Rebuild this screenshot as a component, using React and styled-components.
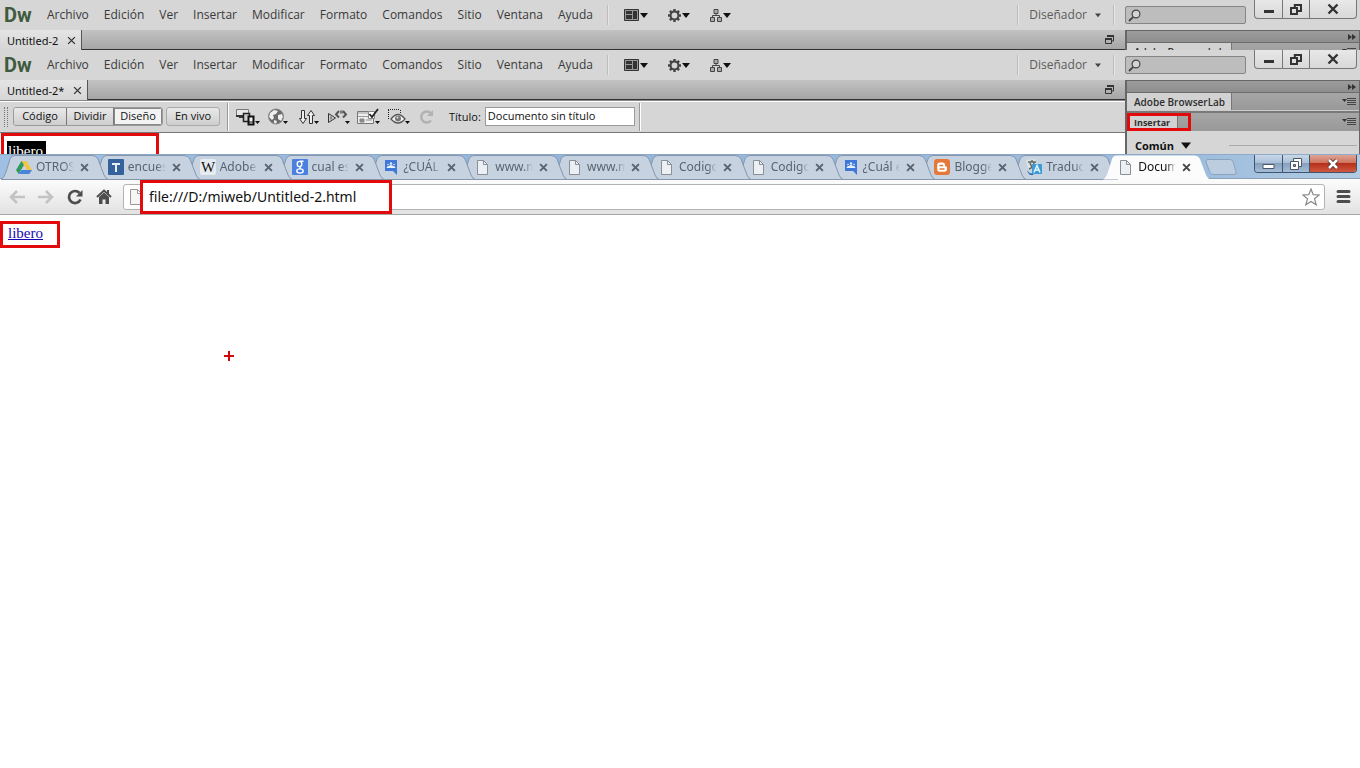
import styled, { createGlobalStyle, css } from "styled-components";

const GlobalStyle = createGlobalStyle`
  *, *::before, *::after { box-sizing: border-box; }
  body {
    margin: 0;
    background: #fff;
    font-family: "Open Sans", "Noto Sans", sans-serif;
    font-size: 12px;
  }
  button, input {
    font: inherit;
    color: inherit;
    margin: 0;
    padding: 0;
    border: 0;
    background: none;
    border-radius: 0;
  }
  svg { display: block; flex: none; }
`;

const Screen = styled.div`
  min-height: 100vh;
  display: flex;
  flex-direction: column;
  overflow: hidden;
`;

/* ---------- Dreamweaver ---------- */

const DwWindow = styled.section`
  height: ${({ $height }) => $height}px;
  overflow: hidden;
  background: #d6d6d6;
  flex: none;
`;

const MenuBar = styled.header`
  height: 30px;
  display: flex;
  align-items: center;
  color: #3a3a3a;
`;

const DwLogo = styled.span`
  width: 47px;
  padding-left: 4px;
  font-family: Roboto, sans-serif;
  font-weight: 700;
  font-size: 20px;
  line-height: 28px;
  color: #3f5a3f;
`;

const Menu = styled.nav`
  display: flex;
  gap: 15px;
  margin-right: 14px;
  button { line-height: 28px; }
`;

const Separator = styled.span`
  width: 2px;
  height: 20px;
  background: #bcbcbc;
  border-right: 1px solid #e6e6e6;
`;

const IconMenus = styled.div`
  display: flex;
  gap: 20px;
  margin-left: 15px;
  button {
    display: flex;
    align-items: center;
    gap: 1px;
  }
`;

const Workspace = styled.button`
  display: flex;
  align-items: center;
  gap: 8px;
  padding: 0 12px 0 10px;
  line-height: 28px;
  color: #5c5c5c;
`;

const Spacer = styled.span`
  flex: 1;
`;

const SearchBox = styled.label`
  width: 121px;
  height: 18px;
  margin: 0 8px 0 10px;
  padding-left: 2px;
  display: flex;
  align-items: center;
  border: 1px solid #858585;
  border-radius: 2px;
  background: #bdbdbd;
  input {
    flex: 1;
    min-width: 0;
    outline: none;
  }
`;

const Caption = styled.div`
  align-self: flex-start;
  display: grid;
  grid-template-columns: 27px 27px 47px;
  height: 19px;
  margin-right: 3px;
  border: 1px solid #777;
  border-top: 0;
  border-radius: 0 0 4px 4px;
  background: linear-gradient(#e8e8e8, #d8d8d8);
  button {
    display: flex;
    align-items: center;
    justify-content: center;
  }
  button + button { border-left: 1px solid #777; }
`;

const DwBody = styled.div`
  display: flex;
  align-items: stretch;
`;

const DocColumn = styled.div`
  flex: 1;
  min-width: 0;
`;

const DocBar = styled.div`
  height: 20px;
  display: flex;
  align-items: stretch;
  background: linear-gradient(#c2c2c2, #a6a6a6);
  border-bottom: 1px solid #333;
`;

const DocTab = styled.div`
  display: flex;
  align-items: center;
  gap: 9px;
  height: 20px;
  padding: 0 5px 0 7px;
  border-right: 1px solid #555;
  background: linear-gradient(#e4e4e4, #d6d6d6);
  font-family: "Noto Sans", sans-serif;
  font-size: 11px;
  color: #111;
`;

const PlainButton = styled.button`
  display: flex;
  align-items: center;
  justify-content: center;
`;

const RestoreButton = styled(PlainButton)`
  margin: 0 11px 0 auto;
`;

const DocToolbar = styled.div`
  height: 33px;
  display: flex;
  align-items: center;
  padding-left: 4px;
  border-top: 1px solid #888;
  border-bottom: 1px solid #777;
  background: #d6d6d6;
  box-shadow: inset 0 1px #fff;
  font-size: 11px;
  color: #111;
`;

const Grip = styled.span`
  width: 4px;
  height: 20px;
  margin-right: 5px;
  border: 1px dotted #777;
  border-width: 0 1px;
`;

const Segments = styled.div`
  display: flex;
  border: 1px solid #9a9a9a;
  border-radius: 3px;
  height: 19px;
  overflow: hidden;
`;

const Segment = styled.button`
  width: ${({ $width }) => $width}px;
  padding-bottom: 2px;
  line-height: 15px;
  background: linear-gradient(#e9e9e9, #cecece);
  ${({ $active }) =>
    $active &&
    css`
      background: #f3f3f3;
      box-shadow: inset 0 0 0 1px #888;
    `}
  & + & { border-left: 1px solid #777; }
`;

const LiveButton = styled.button`
  width: 54px;
  height: 19px;
  padding-bottom: 2px;
  line-height: 15px;
  margin: 0 7px 0 3px;
  border: 1px solid #aaa;
  border-radius: 3px;
  background: linear-gradient(#e9e9e9, #cecece);
`;

const ToolSeparator = styled.span`
  width: 2px;
  height: 28px;
  border-left: 1px solid #999;
  background: #fff;
`;

const ToolIcons = styled.div`
  display: flex;
  align-items: center;
  gap: 6px;
  margin: 0 9px 0 7px;
  button { width: 24px; }
`;

const TitleField = styled.label`
  display: flex;
  align-items: center;
  gap: 4px;
  margin-right: 4px;
  input {
    width: 150px;
    height: 19px;
    padding: 0 2px 3px;
    border: 1px solid #9a9a9a;
    background: #fff;
  }
`;

const DesignView = styled.div`
  height: 22px;
  background: #fff;
  padding-left: 1px;
  overflow: hidden;
`;

const Selection = styled.span`
  display: inline-block;
  margin: 5px 0 0 3px;
  padding: 0 3px 0 1px;
  background: #000;
  color: #fff;
  font: 15px/21px "Liberation Serif", serif;
`;

const Marker = styled.div`
  border: 3px solid #e20a0a;
`;

const SelectionMarker = styled(Marker)`
  width: 158px;
  height: 40px;
`;

const Panels = styled.aside`
  width: 235px;
  flex: none;
  border: 1px solid #666;
  border-width: 1px 1px 0 2px;
  color: #2e2e2e;
`;

const PanelTop = styled.div`
  height: 12px;
  display: flex;
  align-items: center;
  justify-content: flex-end;
  padding-right: 3px;
  background: linear-gradient(#9c9c9c, #8e8e8e);
  border-bottom: 1px solid #6c6c6c;
`;

const PanelRow = styled.div`
  height: ${({ $small }) => ($small ? 18 : 17)}px;
  display: flex;
  align-items: stretch;
  justify-content: space-between;
  padding-right: 3px;
  background: linear-gradient(#a6a6a6, #999);
  font-size: ${({ $small }) => ($small ? 9 : 10)}px;
  font-weight: ${({ $small }) => ($small ? 700 : 600)};
`;

const PanelTab = styled.div`
  display: flex;
  align-items: center;
  padding: 0 6px 0 7px;
  background: #d2d2d2;
  border-right: 1px solid #777;
`;

const InsertMarker = styled(Marker)`
  width: 64px;
  display: flex;
  ${PanelTab} { padding: 0 7px 0 4px; }
`;

const PanelGap = styled.div`
  height: 3px;
  background: #7a7a7a;
  border-top: 1px solid #ccc;
`;

const Category = styled.div`
  display: flex;
  align-items: center;
  height: 28px;
  padding: 0 2px 0 8px;
  background: #d6d6d6;
  button {
    display: flex;
    align-items: center;
    gap: 7px;
    width: 94px;
    font-size: 11px;
    font-weight: 700;
    color: #111;
  }
  hr {
    flex: 1;
    border: 0;
    border-top: 1px solid #aaa;
  }
`;

/* ---------- Browser ---------- */

const Browser = styled.main`
  flex: 1;
  display: flex;
  flex-direction: column;
`;

const TabStrip = styled.div`
  height: 25px;
  display: flex;
  align-items: stretch;
  background: linear-gradient(90deg, #9fc0e3, #94b4da 40%, #9dbddd 88%, #b2cbe2);
  border-top: 1px solid #8fa9c8;
  border-bottom: 1px solid #8d9fb5;
`;

const Tabs = styled.div`
  flex: 1;
  display: flex;
  min-width: 0;
  margin-bottom: -1px;
`;

const TabItem = styled.div`
  flex: 1 1 0;
  min-width: 0;
  position: relative;
  z-index: ${({ $order }) => $order};
  display: flex;
  align-items: center;
  padding: 0 3px 0 16px;
  font-family: "Noto Sans", sans-serif;
  color: ${({ $active }) => ($active ? "#111" : "#5a6470")};
  > * { position: relative; }
`;

const TabShape = styled.svg`
  && {
    position: absolute;
    left: 0;
    top: 0;
  }
`;

const TabTitle = styled.span`
  flex: 1;
  margin: 0 6px 0 4px;
  overflow: hidden;
  white-space: nowrap;
  line-height: 24px;
  mask-image: linear-gradient(90deg, #000 75%, transparent);
`;

const NewTab = styled(PlainButton)`
  align-self: center;
  margin: 0 17px 0 11px;
`;

const BrowserCaption = styled.div`
  display: grid;
  grid-template-columns: 27px 27px 47px;
  height: 18px;
  margin-right: 3px;
  border: 1px solid #40546e;
  border-top: 0;
  border-radius: 0 0 4px 4px;
  overflow: hidden;
`;

const BrowserCaptionButton = styled(PlainButton)`
  background: ${({ $close }) =>
    $close
      ? "linear-gradient(#dfa394, #cf7560 45%, #b5301c 50%, #d0583f)"
      : "linear-gradient(#c9d8e8, #aabfd8 45%, #86a0bf 50%, #a4bcd6)"};
  & + & { border-left: 1px solid #40546e; }
`;

const NavBar = styled.div`
  height: 36px;
  display: flex;
  align-items: center;
  padding: 0 9px 0 9px;
  border-bottom: 1px solid #a6a6a6;
  background: linear-gradient(#fcfcfc, #e2e2e2);
`;

const NavButtons = styled.div`
  display: flex;
  gap: 13px;
  margin-right: 11px;
`;

const Omnibox = styled.div`
  flex: 1;
  height: 26px;
  display: flex;
  align-items: center;
  justify-content: space-between;
  padding: 0 4px 0 6px;
  border: 1px solid #b3b3b3;
  border-radius: 3px;
  background: #fff;
`;

const Address = styled.div`
  display: flex;
  align-items: center;
  input {
    width: 252px;
    height: 34px;
    padding: 0 6px 1px;
    margin-left: -1px;
    border: 3px solid #e20a0a;
    background: #fff;
    font-family: "Noto Sans", sans-serif;
    font-size: 14px;
    color: #111;
    outline: none;
    z-index: 1;
  }
`;

const BrowserMenu = styled(PlainButton)`
  margin-left: 11px;
`;

const WebPage = styled.article`
  position: relative;
  flex: 1;
  padding-top: 6px;
  background: #fff;
`;

const LinkMarker = styled(Marker)`
  width: 60px;
  height: 27px;
  padding-left: 5px;
  font: 15px/18px "Liberation Serif", serif;
  a { color: #1608b4; }
`;

const CrossPointer = styled.svg`
  position: absolute;
  left: 224px;
  top: 136px;
`;

/* ---------- Icons ---------- */

const Arrow = ({ size = 7, color = "#111" }) => (
  <svg width={size} height={size} viewBox="0 0 8 8" aria-hidden="true">
    <path d="M0 2h8L4 7z" fill={color} />
  </svg>
);

const Cross = ({ color = "#555", size = 8, weight = 2 }) => (
  <svg width={size} height={size} viewBox="0 0 8 8" aria-hidden="true">
    <path d="M1 1l6 6M7 1L1 7" stroke={color} strokeWidth={weight} />
  </svg>
);

const LayoutIcon = () => (
  <svg width="15" height="12" viewBox="0 0 15 12">
    <path d="M.5.5h14v11H.5z" fill="#999" stroke="#333" />
    <path d="M2 2h6v3H2zM2 6h6v4H2zM9 2h4v8H9z" fill="#333" />
  </svg>
);

const GearIcon = () => (
  <svg width="13" height="13" viewBox="0 0 13 13">
    <path
      d="M6.500 0v13M0 6.500h13M1.900 1.900l9.200 9.200M11.100 1.900l-9.200 9.200"
      stroke="#444"
      strokeWidth="2.400"
    />
    <circle cx="6.500" cy="6.500" r="3.900" fill="#d6d6d6" stroke="#444" strokeWidth="2" />
  </svg>
);

const SiteIcon = () => (
  <svg width="12" height="13" viewBox="0 0 12 13">
    <path d="M4 .5h4v4H4zM.5 8.500h4v4h-4zM7.500 8.500h4v4h-4z" fill="#aaa" stroke="#444" />
    <path d="M6 5v2M2.500 8V6.500h7V8" fill="none" stroke="#444" />
  </svg>
);

const LensIcon = () => (
  <svg width="13" height="13" viewBox="0 0 13 13">
    <circle cx="8" cy="5" r="3.900" fill="#d4d4d4" stroke="#444" strokeWidth="1.200" />
    <path d="M5.300 7.800L1 12" stroke="#444" strokeWidth="1.800" />
  </svg>
);

const CascadeIcon = () => (
  <svg width="9" height="9" viewBox="0 0 9 9">
    <path d="M2 .5h7M2 1.500h7M0 4.500h7" stroke="#333" />
    <path d="M8.500 1v5H7M.5 4v4.500h6V4M0 3.500h7" fill="none" stroke="#333" />
  </svg>
);

const MinIcon = () => (
  <svg width="10" height="10" viewBox="0 0 10 10">
    <path d="M0 6h10v3H0z" fill="#333" />
  </svg>
);

const RestoreIcon = () => (
  <svg width="12" height="11" viewBox="0 0 12 11">
    <path d="M4.800 3V1h6.200v6H8" fill="none" stroke="#333" strokeWidth="2" />
    <path d="M1 4h6v6H1z" fill="none" stroke="#333" strokeWidth="2" />
  </svg>
);

const PanelMenuIcon = () => (
  <svg width="15" height="17" viewBox="0 0 15 17">
    <path d="M1 6h5L3.500 9z" fill="#333" />
    <path d="M6 5.500h9M6 7.500h9M6 9.500h9M6 11.500h9" stroke="#444" />
  </svg>
);

const ExpandIcon = () => (
  <svg width="8" height="6" viewBox="0 0 8 6">
    <path d="M0 0l4 3-4 3zM4 0l4 3-4 3z" fill="#333" />
  </svg>
);

const toolDrawings = {
  Multipantalla: (
    <>
      <path d="M.5 1.500h12v6H.5z" fill="#e8e8e8" stroke="#777" />
      <path d="M0 7h8v2H0zM3 9h4v1H3z" fill="#333" />
      <path d="M7.500 5.500h6v8h-6z" fill="#ccc" stroke="#222" strokeWidth="1.500" />
      <path d="M12.500 8.500h5v8h-5z" fill="#f3f3f3" stroke="#111" strokeWidth="2" />
      <path d="M13 14h4" stroke="#111" />
    </>
  ),
  Vista: (
    <>
      <circle cx="10" cy="8.500" r="7.500" fill="#6a6a6a" />
      <path d="M4 5l4-3 4 1-2 3-3 1 1 3-2 2-3-3zM12 7l4-1 1 3-2 4-3-2zM8 12l3 1-1 3-2-1z" fill="#eee" />
      <circle cx="10" cy="8.500" r="7.500" fill="none" stroke="#888" />
    </>
  ),
  Archivos: (
    <g fill="#eee" stroke="#333">
      <path d="M5.500 2.500h3v8h2l-3.500 5-3.500-5h2z" />
      <path d="M13.500 15.500h3v-8h2L15 2.500l-3.500 5h2z" />
    </g>
  ),
  Validar: (
    <>
      <path d="M2.500 5.500l7 4.500-7 4.500z" fill="#ccc" stroke="#333" />
      <path d="M5 8.500v3" stroke="#444" />
      <path d="M13 3l-3 3.500 3 3M17 3l3 3.500-3 3" fill="none" stroke="#555" strokeWidth="2" />
      <path d="M14 2.500h3v3h-3z" fill="#777" />
    </>
  ),
  Comprobar: (
    <>
      <path d="M1.500 3.500h16v12h-16z" fill="#eee" stroke="#777" />
      <path d="M2 5h15M2 8.500h15" stroke="#999" />
      <path d="M4 11h4v3H4zM10 12h6" fill="#888" stroke="#888" />
      <path d="M12.500 3.500h6v7h-6z" fill="#fff" stroke="#888" />
      <path d="M13.500 6l2.500 3 6-8" fill="none" stroke="#222" strokeWidth="1.800" />
    </>
  ),
  Ayudas: (
    <>
      <path d="M2 1.500h12M2.500 2v10M14.500 2v3" stroke="#222" strokeDasharray="1 1" />
      <path d="M5 11q7-9 14 0-7 8-14 0z" fill="#f3f3f3" stroke="#555" strokeWidth="1.300" />
      <circle cx="12" cy="10.500" r="3" fill="#777" />
      <circle cx="11.500" cy="9.500" r="1" fill="#ddd" />
    </>
  ),
  Actualizar: (
    <>
      <path d="M15 12.500A5.500 5.500 0 1 1 14.500 5" fill="none" stroke="#b2b2b2" strokeWidth="2.500" />
      <path d="M17 2v6h-6z" fill="#b2b2b2" />
    </>
  ),
};

const ToolIcon = ({ name }) => (
  <svg width="24" height="18" viewBox="0 0 24 18">
    {toolDrawings[name]}
    {name !== "Actualizar" && (
      <path
        d="M0 13h5l-2.500 3z"
        fill="#111"
        transform={`translate(${{ Archivos: 18, Vista: 17 }[name] || 19} 0)`}
      />
    )}
  </svg>
);

const favicons = {
  drive: (
    <>
      <path d="M5.500 2h5L16 11h-5z" fill="#f2c544" />
      <path d="M5.500 2L0 11l2.600 4L8 6z" fill="#2f9a5b" />
      <path d="M2.600 15L5.400 11H16l-2.600 4z" fill="#4a83dc" />
    </>
  ),
  t: (
    <>
      <rect width="16" height="16" rx="1" fill="#33629c" />
      <path d="M4 4h8v2H9v7H7V6H4z" fill="#e8eef6" />
    </>
  ),
  wiki: (
    <>
      <rect width="16" height="16" rx="2" fill="#e6ebf0" />
      <text x="8" y="13" textAnchor="middle" fontFamily="Liberation Serif" fontSize="15" fill="#111">W</text>
    </>
  ),
  google: (
    <>
      <rect width="16" height="16" rx="1" fill="#4b80df" />
      <g fill="none" stroke="#fff" strokeWidth="1.400">
        <ellipse cx="7.500" cy="5" rx="2.300" ry="2.600" />
        <path d="M8 2.300h3.500M8.500 7.500q-1.500 1 .5 2.200" />
        <ellipse cx="8" cy="12" rx="3.200" ry="2.100" />
      </g>
    </>
  ),
  groups: (
    <>
      <path d="M2 1h12v15l-4-4H2z" fill="#3f78d8" />
      <path d="M3.500 9q.5-2.500 2.500-2Q8 5 10 7q2-.5 2.500 2z" fill="#e9f0fb" />
      <circle cx="8" cy="4.500" r="1.200" fill="#e9f0fb" />
      <circle cx="5" cy="5.500" r=".8" fill="#e9f0fb" />
      <circle cx="11" cy="5.500" r=".8" fill="#e9f0fb" />
    </>
  ),
  file: (
    <>
      <path d="M2.500 1.500h6l4 4v10h-10z" fill="#eceff3" stroke="#8a8f96" />
      <path d="M8.500 1.500v4h4" fill="none" stroke="#8a8f96" />
    </>
  ),
  blogger: (
    <>
      <rect width="16" height="16" rx="3" fill="#e5793a" />
      <path d="M6 3.500h2.500Q11 3.500 11 6t2 1.500v2.500q0 2.800-2.800 2.800H6q-2.800 0-2.800-2.800V6.300Q3.200 3.500 6 3.500z" fill="#fff" />
      <path d="M6 6.500h2.500M6 10h4" stroke="#e5793a" strokeWidth="1.500" strokeLinecap="round" />
    </>
  ),
  translate: (
    <>
      <path d="M0 1l9-1 3 10H2z" fill="#dde3e2" />
      <path d="M2 3h8M6 1v2M3 10q5-2 5-7M4 4q1 4 5 5" stroke="#5f696a" strokeWidth="1.500" fill="none" />
      <path d="M1 11q3 5 7 3l-1 2q-4 1-6-5z" fill="#2465ae" />
      <rect x="6" y="5" width="10" height="10" rx="1" fill="#3b9bd6" />
      <path d="M8 13.500l3-7 3 7M9 11h4" stroke="#e8f4fb" strokeWidth="1.500" fill="none" />
    </>
  ),
};

const Favicon = ({ name }) => (
  <svg width="16" height="16" viewBox="0 0 16 16">
    {favicons[name]}
  </svg>
);

/* ---------- Parts ---------- */

const menus = ["Archivo", "Edición", "Ver", "Insertar", "Modificar", "Formato", "Comandos", "Sitio", "Ventana", "Ayuda"];

const DwMenuBar = () => (
  <MenuBar>
    <DwLogo>Dw</DwLogo>
    <Menu>
      {menus.map((name) => (
        <button key={name}>{name}</button>
      ))}
    </Menu>
    <Separator />
    <IconMenus>
      <button aria-label="Diseño"><LayoutIcon /><Arrow size={8} /></button>
      <button aria-label="Extensiones"><GearIcon /><Arrow size={8} /></button>
      <button aria-label="Sitios"><SiteIcon /><Arrow size={8} /></button>
    </IconMenus>
    <Spacer />
    <Separator />
    <Workspace>
      Diseñador
      <Arrow size={6} color="#444" />
    </Workspace>
    <Separator />
    <SearchBox>
      <LensIcon />
      <input type="text" aria-label="Buscar" />
    </SearchBox>
    <Caption>
      <button aria-label="Minimizar"><MinIcon /></button>
      <button aria-label="Restaurar"><RestoreIcon /></button>
      <button aria-label="Cerrar"><Cross size={12} weight={1.6} color="#333" /></button>
    </Caption>
  </MenuBar>
);

const DocumentBar = ({ title }) => (
  <DocBar>
    <DocTab>
      {title}
      <PlainButton aria-label="Cerrar documento"><Cross size={9} weight={1.2} color="#333" /></PlainButton>
    </DocTab>
    <RestoreButton aria-label="Restaurar documento"><CascadeIcon /></RestoreButton>
  </DocBar>
);

const BrowserLabPanel = () => (
  <>
    <PanelTop><ExpandIcon /></PanelTop>
    <PanelRow>
      <PanelTab>Adobe BrowserLab</PanelTab>
      <PanelMenuIcon />
    </PanelRow>
  </>
);

const tabs = [
  ["drive", "OTROS"],
  ["t", "encues"],
  ["wiki", "Adobe"],
  ["google", "cual es"],
  ["groups", "¿CUÁL"],
  ["file", "www.m"],
  ["file", "www.m"],
  ["file", "Codigo"],
  ["file", "Codigo"],
  ["groups", "¿Cuál e"],
  ["blogger", "Blogge"],
  ["translate", "Traduc"],
  ["file", "Docum"],
];

const BrowserTab = ({ icon, title, active, order }) => (
  <TabItem $active={active} $order={order}>
    <TabShape width="110" height="25" viewBox="0 0 110 25" aria-hidden="true">
      <path
        d="M1 24.500Q4 23 6 17L10 4Q11 .5 15 .5H92Q96 .5 98 4l6 16q2 4 4 4.500z"
        fill={active ? "#fcfcfc" : "#c6d2e0"}
        stroke={active ? "none" : "#8496ad"}
      />
    </TabShape>
    <Favicon name={icon} />
    <TabTitle>{title}</TabTitle>
    <PlainButton aria-label={`Cerrar ${title}`}><Cross color={active ? "#444" : "#59636f"} weight={1.7} size={9} /></PlainButton>
  </TabItem>
);

const App = () => (
  <Screen>
    <GlobalStyle />

    <DwWindow $height={50}>
      <DwMenuBar />
      <DwBody>
        <DocColumn>
          <DocumentBar title="Untitled-2" />
        </DocColumn>
        <Panels>
          <BrowserLabPanel />
        </Panels>
      </DwBody>
    </DwWindow>

    <DwWindow $height={104}>
      <DwMenuBar />
      <DwBody>
        <DocColumn>
          <DocumentBar title="Untitled-2*" />
          <DocToolbar>
            <Grip />
            <Segments>
              <Segment $width={52}>Código</Segment>
              <Segment $width={47}>Dividir</Segment>
              <Segment $width={49} $active>Diseño</Segment>
            </Segments>
            <LiveButton>En vivo</LiveButton>
            <ToolSeparator />
            <ToolIcons>
              {Object.keys(toolDrawings).map((name) => (
                <PlainButton key={name} aria-label={name}><ToolIcon name={name} /></PlainButton>
              ))}
            </ToolIcons>
            <TitleField>
              Título:
              <input type="text" defaultValue="Documento sin título" />
            </TitleField>
            <ToolSeparator />
          </DocToolbar>
          <DesignView>
            <SelectionMarker>
              <Selection>libero</Selection>
            </SelectionMarker>
          </DesignView>
        </DocColumn>
        <Panels>
          <BrowserLabPanel />
          <PanelGap />
          <PanelRow $small>
            <InsertMarker>
              <PanelTab>Insertar</PanelTab>
            </InsertMarker>
            <PanelMenuIcon />
          </PanelRow>
          <Category>
            <button>Común <Arrow size={10} /></button>
            <hr />
          </Category>
        </Panels>
      </DwBody>
    </DwWindow>

    <Browser>
      <TabStrip>
        <Tabs>
          {tabs.map(([icon, title], i) => (
            <BrowserTab
              key={i}
              icon={icon}
              title={title}
              active={i === tabs.length - 1}
              order={i === tabs.length - 1 ? tabs.length + 1 : tabs.length - i}
            />
          ))}
        </Tabs>
        <NewTab aria-label="Nueva pestaña">
          <svg width="32" height="16" viewBox="0 0 32 16">
            <path d="M3 .5h22q2 0 3 2l3 10q1 3-2 3H8q-2 0-3-2L1 3Q0 .5 3 .5z" fill="#bccddf" stroke="#8ba3be" />
          </svg>
        </NewTab>
        <BrowserCaption>
          <BrowserCaptionButton aria-label="Minimizar">
            <svg width="13" height="12" viewBox="0 0 13 12">
              <path d="M1 6.500h11v4H1z" fill="#fff" stroke="#4b5666" />
            </svg>
          </BrowserCaptionButton>
          <BrowserCaptionButton aria-label="Restaurar">
            <svg width="12" height="12" viewBox="0 0 12 12">
              <path d="M3.500.5h8v8h-8z" fill="#fff" stroke="#4b5666" />
              <path d="M.5 3.500h8v8h-8z" fill="#fff" stroke="#4b5666" />
              <path d="M3.500 6.500h2v2h-2z" fill="#8aa0bb" stroke="#4b5666" />
            </svg>
          </BrowserCaptionButton>
          <BrowserCaptionButton $close aria-label="Cerrar">
            <svg width="12" height="12" viewBox="0 0 12 12">
              <path d="M2 2l8 8M10 2l-8 8" stroke="#54383a" strokeWidth="4.500" />
              <path d="M2 2l8 8M10 2l-8 8" stroke="#fff" strokeWidth="2.500" />
            </svg>
          </BrowserCaptionButton>
        </BrowserCaption>
      </TabStrip>

      <NavBar>
        <NavButtons>
          <PlainButton aria-label="Atrás">
            <svg width="16" height="16" viewBox="0 0 16 16">
              <path d="M8 2L2 8l6 6M2 8h14" fill="none" stroke="#c3c3c3" strokeWidth="2.500" />
            </svg>
          </PlainButton>
          <PlainButton aria-label="Adelante">
            <svg width="16" height="16" viewBox="0 0 16 16">
              <path d="M8 2l6 6-6 6M14 8H0" fill="none" stroke="#c3c3c3" strokeWidth="2.500" />
            </svg>
          </PlainButton>
          <PlainButton aria-label="Recargar">
            <svg width="16" height="16" viewBox="0 0 16 16">
              <path d="M13.500 10.500a6 6 0 1 1-1-6.500" fill="none" stroke="#4d4d4d" strokeWidth="2.700" />
              <path d="M15.500 1v6.500H9z" fill="#4d4d4d" />
            </svg>
          </PlainButton>
          <PlainButton aria-label="Inicio">
            <svg width="16" height="16" viewBox="0 0 16 16">
              <path d="M1 8l7-6.500L15 8" fill="none" stroke="#4d4d4d" strokeWidth="2" />
              <path d="M11 1h2v5h-2zM3 8l5-4.500L13 8v7H9.500v-4.500h-3V15H3z" fill="#4d4d4d" />
            </svg>
          </PlainButton>
        </NavButtons>
        <Omnibox>
          <Address>
            <svg width="11" height="16" viewBox="0 0 11 16">
              <path d="M.5.5h7l4 4v11H.5zM7.500.5v4h4" fill="#f6f6f6" stroke="#999" />
            </svg>
            <input type="text" aria-label="Dirección" defaultValue="file:///D:/miweb/Untitled-2.html" />
          </Address>
          <PlainButton aria-label="Marcador">
            <svg width="18" height="18" viewBox="0 0 18 18">
              <path d="M9 1l2.200 5.700 6 .3-4.700 3.800 1.700 6L9 13.400l-5.200 3.400 1.700-6L.8 7l6-.3z" fill="#fff" stroke="#888" strokeWidth="1.200" />
            </svg>
          </PlainButton>
        </Omnibox>
        <BrowserMenu aria-label="Menú">
          <svg width="15" height="13" viewBox="0 0 15 13">
            <path d="M2 1.500h11M2 6.500h11M2 11.500h11" stroke="#4d4d4d" strokeWidth="3" strokeLinecap="round" />
          </svg>
        </BrowserMenu>
      </NavBar>

      <WebPage>
        <LinkMarker>
          <a href="#libero">libero</a>
        </LinkMarker>
        <CrossPointer width="10" height="10" viewBox="0 0 10 10" aria-hidden="true">
          <path d="M4 0h2v4h4v2H6v4H4V6H0V4h4z" fill="#d00808" />
        </CrossPointer>
      </WebPage>
    </Browser>
  </Screen>
);

export default App;
